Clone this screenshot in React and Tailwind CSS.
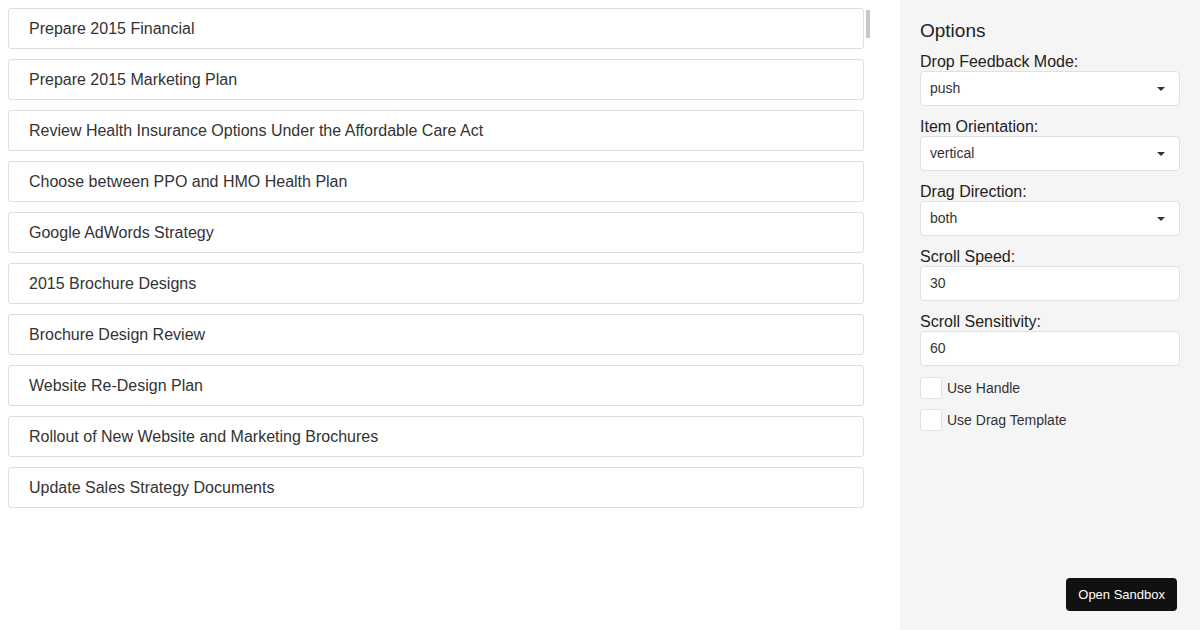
import React from 'react';

const tasks = [
  'Prepare 2015 Financial',
  'Prepare 2015 Marketing Plan',
  'Review Health Insurance Options Under the Affordable Care Act',
  'Choose between PPO and HMO Health Plan',
  'Google AdWords Strategy',
  '2015 Brochure Designs',
  'Brochure Design Review',
  'Website Re-Design Plan',
  'Rollout of New Website and Marketing Brochures',
  'Update Sales Strategy Documents',
];

function Select({ value }) {
  return (
    <div className="flex items-center justify-between h-[35px] px-[9px] bg-white border border-[#e0e0e0] rounded-[4px] text-[14px] text-[#333]">
      <span>{value}</span>
      <span className="mr-[5px] w-0 h-0 border-l-[4px] border-r-[4px] border-t-[4px] border-l-transparent border-r-transparent border-t-[#333]" />
    </div>
  );
}

function TextBox({ value }) {
  return (
    <div className="flex items-center h-[35px] px-[9px] bg-white border border-[#e0e0e0] rounded-[4px] text-[14px] text-[#333]">
      {value}
    </div>
  );
}

function Field({ label, children }) {
  return (
    <div className="mt-[11px] first:mt-0">
      <div className="h-[19px] leading-[20px] text-[16px] text-[#222]">{label}</div>
      {children}
    </div>
  );
}

function Check({ label }) {
  return (
    <div className="flex items-center gap-[5px] h-[22px]">
      <span className="w-[22px] h-[22px] bg-white border border-[#e0e0e0] rounded-[3px]" />
      <span className="text-[14px] text-[#333]">{label}</span>
    </div>
  );
}

export default function App() {
  return (
    <div
      className="flex w-[1200px] h-[630px] bg-white overflow-hidden"
      style={{ fontFamily: '"Liberation Sans", Arial, sans-serif' }}
    >
      <div className="flex w-[900px] pt-[8px] pl-[8px] gap-[2px]">
        <div className="flex flex-col gap-[10px] w-[856px]">
          {tasks.map((t) => (
            <div
              key={t}
              className="flex items-center h-[41px] px-[20px] border border-[#dedede] rounded-[3px] bg-white text-[16px] text-[#333]"
            >
              {t}
            </div>
          ))}
        </div>
        <div className="w-[4px] h-[28px] mt-[2px] bg-[#c8c8c8]" />
      </div>

      <div className="flex flex-col w-[300px] bg-[#f5f5f5] px-[20px] pt-[21px] pb-[19px]">
        <div className="h-[20px] leading-[20px] text-[19px] text-[#222]">Options</div>
        <div className="mt-[11px] flex flex-col">
          <Field label="Drop Feedback Mode:"><Select value="push" /></Field>
          <Field label="Item Orientation:"><Select value="vertical" /></Field>
          <Field label="Drag Direction:"><Select value="both" /></Field>
          <Field label="Scroll Speed:"><TextBox value="30" /></Field>
          <Field label="Scroll Sensitivity:"><TextBox value="60" /></Field>
        </div>
        <div className="mt-[11px] flex flex-col gap-[10px]">
          <Check label="Use Handle" />
          <Check label="Use Drag Template" />
        </div>
        <div className="mt-auto flex justify-end pr-[3px]">
          <button className="h-[33px] px-[12px] bg-[#111] text-white text-[13px] rounded-[4px]">
            Open Sandbox
          </button>
        </div>
      </div>
    </div>
  );
}
